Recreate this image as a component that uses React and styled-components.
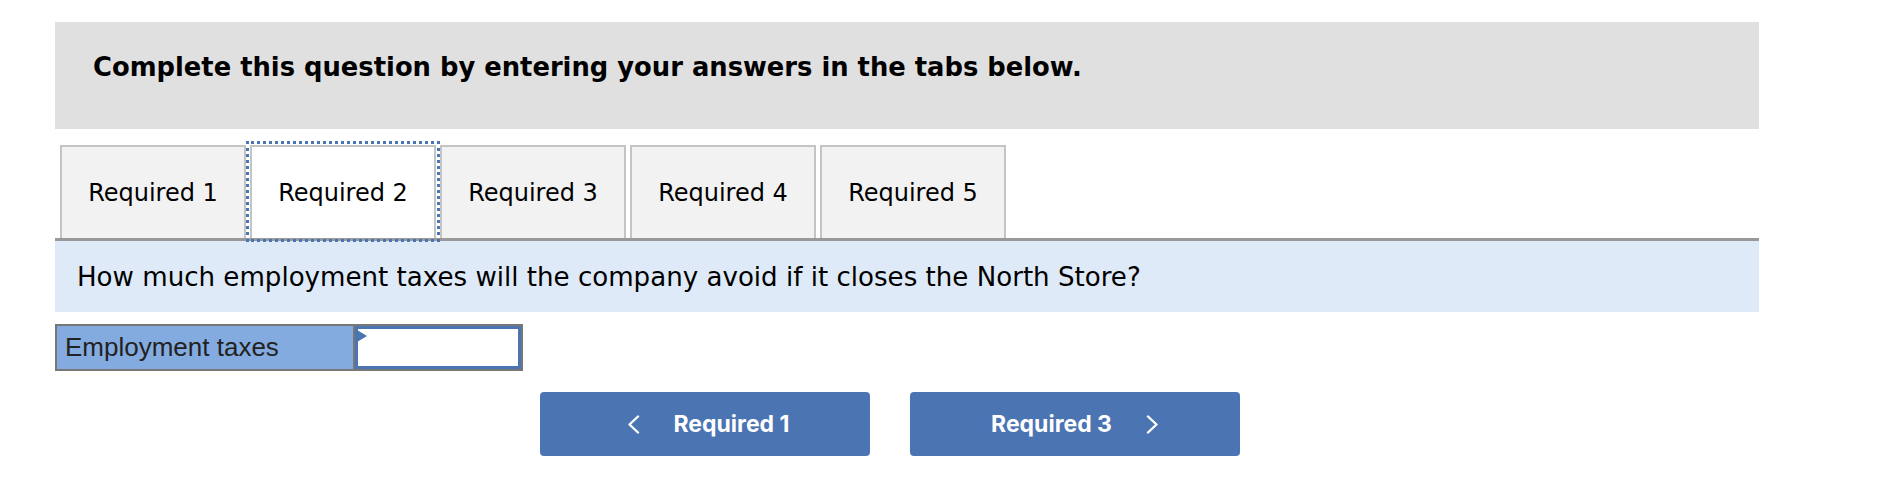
import React from 'react';
import styled, { createGlobalStyle } from 'styled-components';

const GlobalStyle = createGlobalStyle`
  body {
    margin: 0;
    background: #fff;
  }
`;

const Page = styled.div`
  width: 1704px;
  padding: 22px 0 0 55px;
`;

const Header = styled.div`
  box-sizing: border-box;
  height: 107px;
  padding: 30px 0 0 38px;
  background: #e0e0e0;
  font-family: 'DejaVu Sans', Verdana, sans-serif;
  font-weight: bold;
  font-size: 25.8px;
  color: #000;
`;

const TabBar = styled.div`
  display: flex;
  align-items: flex-end;
  gap: 4px;
  margin-top: 16px;
  padding-left: 5px;
  border-bottom: 3px solid #999;
`;

const Tab = styled.div`
  box-sizing: border-box;
  width: 186px;
  height: 93px;
  display: flex;
  align-items: center;
  justify-content: center;
  border: 2px solid #c4c4c4;
  border-bottom: none;
  background: ${p => (p.$active ? '#fff' : '#f2f2f2')};
  outline: ${p => (p.$active ? '3px dotted #4a76b6' : 'none')};
  outline-offset: 1px;
  font-family: 'DejaVu Sans', Tahoma, sans-serif;
  font-size: 24px;
  color: #000;
`;

const Prompt = styled.div`
  display: flex;
  align-items: center;
  height: 71px;
  padding-left: 22px;
  background: #deeaf7;
  font-family: 'DejaVu Sans', Tahoma, sans-serif;
  font-size: 26.1px;
  color: #000;
`;

const AnswerRow = styled.div`
  box-sizing: border-box;
  display: flex;
  width: 468px;
  height: 47px;
  margin-top: 12px;
  border: 2px solid #777;
`;

const AnswerLabel = styled.div`
  display: flex;
  align-items: center;
  width: 288px;
  padding-left: 8px;
  background: #84abdf;
  border-right: 2px solid #777;
  font-family: 'Liberation Sans', Arial, sans-serif;
  font-size: 26px;
  color: #222;
`;

const AnswerInput = styled.div`
  position: relative;
  flex: 1;
  background: #fff;
  border: 3px solid #4a74b2;

  &::before {
    content: '';
    position: absolute;
    left: -1px;
    top: 1px;
    border-top: 6px solid transparent;
    border-bottom: 6px solid transparent;
    border-left: 10px solid #4a74b2;
  }
`;

const NavRow = styled.div`
  display: flex;
  gap: 40px;
  margin-top: 21px;
  padding-left: 485px;
`;

const NavButton = styled.button`
  display: flex;
  align-items: center;
  justify-content: center;
  gap: 34px;
  width: 330px;
  height: 64px;
  padding: 0 0 0 ${p => (p.$back ? '6px' : '0')};
  border: none;
  border-radius: 4px;
  background: #4a74b2;
  color: #fff;
  font-family: Inter, 'Liberation Sans', sans-serif;
  font-weight: 700;
  font-size: 23px;
  cursor: pointer;
`;

const Chevron = ({ dir }) => (
  <svg width="13" height="19" viewBox="0 0 13 19" fill="none">
    <polyline
      points={dir === 'left' ? '11,1.5 2.5,9.5 11,17.5' : '2,1.5 10.5,9.5 2,17.5'}
      stroke="#fff"
      strokeWidth="2.4"
      strokeLinecap="round"
      strokeLinejoin="round"
    />
  </svg>
);

const tabs = ['Required 1', 'Required 2', 'Required 3', 'Required 4', 'Required 5'];

export default function App() {
  return (
    <>
      <GlobalStyle />
      <Page>
        <Header>Complete this question by entering your answers in the tabs below.</Header>
        <TabBar>
          {tabs.map((t, i) => (
            <Tab key={t} $active={i === 1}>{t}</Tab>
          ))}
        </TabBar>
        <Prompt>How much employment taxes will the company avoid if it closes the North Store?</Prompt>
        <AnswerRow>
          <AnswerLabel>Employment taxes</AnswerLabel>
          <AnswerInput />
        </AnswerRow>
        <NavRow>
          <NavButton $back>
            <Chevron dir="left" />
            Required 1
          </NavButton>
          <NavButton>
            Required 3
            <Chevron dir="right" />
          </NavButton>
        </NavRow>
      </Page>
    </>
  );
}
